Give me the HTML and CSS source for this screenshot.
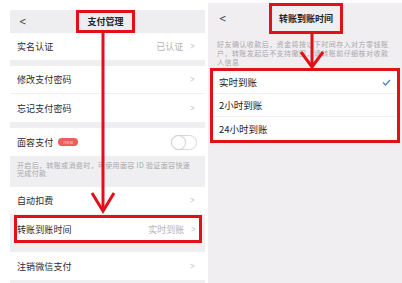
FILE: index.html
```html
<!DOCTYPE html>
<html lang="zh">
<head>
<meta charset="utf-8">
<link rel="stylesheet" href="styles.css">
</head>
<body>
<div class="stage">
  <section class="panel left">
    <header class="nav">
      <span class="back">&lt;</span>
      <span class="title hl">支付管理</span>
    </header>
    <div class="row"><span class="label">实名认证</span><span class="value">已认证<i class="chev">&gt;</i></span></div>
    <div class="gap"></div>
    <div class="row line"><span class="label">修改支付密码</span><span class="value"><i class="chev">&gt;</i></span></div>
    <div class="row"><span class="label">忘记支付密码</span><span class="value"><i class="chev">&gt;</i></span></div>
    <div class="gap"></div>
    <div class="row"><span class="label">面容支付<b class="badge">new</b></span><span class="toggle"><i class="knob"></i></span></div>
    <p class="desc">开启后，转账或消费时，可使用面容 ID 验证面容快速完成付款</p>
    <div class="row line"><span class="label">自动扣费</span><span class="value"><i class="chev">&gt;</i></span></div>
    <div class="row boxed"><span class="label">转账到账时间</span><span class="value">实时到账<i class="chev">&gt;</i></span></div>
    <div class="gap big"></div>
    <div class="row"><span class="label">注销微信支付</span><span class="value"><i class="chev">&gt;</i></span></div>
    <svg class="arrow arrow-left" width="30" height="182" viewBox="0 0 30 182">
      <line x1="15" y1="0" x2="15" y2="178" stroke="#e3101a" stroke-width="3"/>
      <polyline points="4,160 15,178 26,160" fill="none" stroke="#e3101a" stroke-width="3"/>
    </svg>
  </section>
  <section class="panel right">
    <header class="nav">
      <span class="back">&lt;</span>
      <span class="title hl tall">转账到账时间</span>
    </header>
    <p class="desc2">好友确认收款后，资金将按以下时间存入对方零钱账户，转账发起后不支持撤回，请转账前仔细核对收款人信息</p>
    <div class="options">
      <div class="opt"><span>实时到账</span><svg class="check" width="9" height="7" viewBox="0 0 9 7"><polyline points="1,3.5 3.5,6 8,1" fill="none" stroke="#4a86c8" stroke-width="1.3"/></svg></div>
      <div class="opt"><span>2小时到账</span></div>
      <div class="opt"><span>24小时到账</span></div>
    </div>
    <svg class="arrow arrow-right" width="30" height="36" viewBox="0 0 30 36">
      <line x1="15" y1="0" x2="15" y2="33" stroke="#e3101a" stroke-width="3"/>
      <polyline points="4,18 15,33 26,18" fill="none" stroke="#e3101a" stroke-width="3"/>
    </svg>
  </section>
</div>
</body>
</html>
```
FILE: styles.css
```css
* { box-sizing: border-box; margin: 0; padding: 0; }
html, body { width: 402px; height: 283px; overflow: hidden; background: #fff; }
body {
  font-family: "Noto Sans CJK SC", "Noto Sans", sans-serif;
  color: #2b2b2b;
}
.stage { display: flex; align-items: flex-start; height: 283px; }
.panel { position: relative; }
.left {
  margin-top: 10px; margin-left: 10px;
  width: 195px; height: 273px;
  background: #efeef0;
}
.right {
  margin-top: 3px; margin-left: 3px;
  width: 194px; height: 280px;
  background: #f0eef1;
}
.nav {
  position: relative;
  height: 23px;
  display: flex; align-items: center; justify-content: center;
  background: #eeedef;
}
.right .nav { height: 31px; background: transparent; }
.back {
  position: absolute; left: 8px; top: 50%;
  transform: translateY(-55%) scaleX(0.8);
  font-family: "DejaVu Sans", sans-serif;
  font-size: 11px; color: #444;
}
.right .back { left: 10px; }
.title { font-size: 9px; font-weight: bold; color: #222; white-space: nowrap; }
.hl {
  border: 3px solid #e3101a;
  height: 23px;
  display: flex; align-items: center; justify-content: center;
}
.left .hl { padding: 0 8px; margin-left: -4px; }
.right .hl.tall { height: 31px; padding: 0 7px; margin-left: 2px; }
.row {
  height: 28px;
  background: #fff;
  display: flex; align-items: center; justify-content: space-between;
  padding: 0 9px 0 7px;
  font-size: 9px;
  position: relative;
}
.row:first-of-type { height: 27px; }
.line { border-bottom: 1px solid #f1f1f1; }
.gap { height: 6px; }
.gap.big { height: 9px; }
.label { display: flex; align-items: center; letter-spacing: 0.1px; }
.value { color: #b4b4b4; font-size: 9px; display: flex; align-items: center; }
.chev {
  font-style: normal; margin-left: 6px; color: #c2c2c2;
  font-family: "DejaVu Sans", sans-serif; font-size: 8px;
  transform: scaleX(0.7);
}
.badge {
  display: inline-block;
  margin-left: 5px;
  background: #ef5d5d;
  color: #fbd0d0;
  font-size: 5px; font-weight: normal;
  width: 20px; height: 8px; line-height: 8px; text-align: center;
  border-radius: 4px;
}
.toggle {
  width: 26px; height: 15px;
  border: 1px solid #d8d8d8; border-radius: 8px;
  background: #fff; position: relative;
  margin-right: -1px;
}
.knob {
  position: absolute; left: 0; top: 0;
  width: 13px; height: 13px; border-radius: 50%;
  background: #fff; box-shadow: 0 0 1px 1px #d2d2d2;
}
.desc {
  height: 31px;
  padding: 5px 10px 0 7px;
  font-size: 7px; line-height: 8px;
  color: #a8a8a8;
  letter-spacing: 0.35px;
}
.boxed { outline: 3px solid #e3101a; outline-offset: -3px; margin: 0 3px 0 4px; padding-left: 3px; padding-right: 5px; }
.desc2 {
  padding: 6px 8px 0 9px;
  height: 34px;
  font-size: 7px; line-height: 9px;
  color: #aaa7ad;
  letter-spacing: 0.45px;
}
.options {
  margin: 0 2px;
  border: 3px solid #e3101a;
  background: #fff;
}
.opt {
  height: 23px;
  display: flex; align-items: center; justify-content: space-between;
  padding: 0 6px 0 6px;
  font-size: 9.5px; color: #222;
  border-bottom: 1px solid #f2f2f2;
}
.opt:last-child { border-bottom: none; }
.arrow { position: absolute; }
.arrow-left { left: 78px; top: 23px; }
.arrow-right { left: 89px; top: 31px; }
```
